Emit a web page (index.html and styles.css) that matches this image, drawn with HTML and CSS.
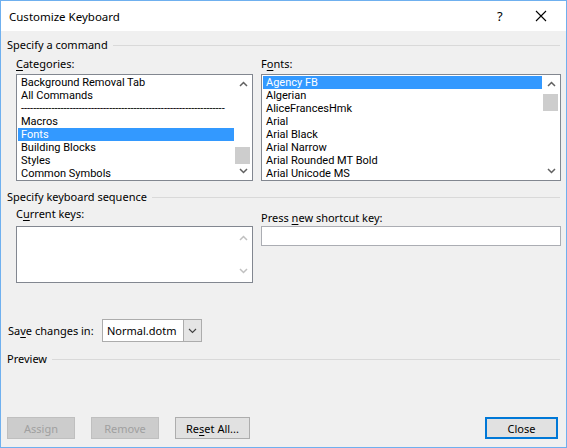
FILE: index.html
```html
<!DOCTYPE html>
<html lang="en">
<head>
  <meta charset="UTF-8" />
  <title>Customize Keyboard</title>
  <link rel="stylesheet" href="styles.css">
</head>
<body>
  <div class="window">
    <div class="titlebar">
      <span class="title">Customize Keyboard</span>
      <span class="help">?</span>
      <svg class="close-x" width="12" height="12" viewBox="0 0 12 12">
        <path d="M1 1 L11 11 M11 1 L1 11" stroke="#000" stroke-width="1.1" fill="none"/>
      </svg>
    </div>

    <div class="content">
      <div class="group-head">Specify a command</div>
      <div class="pair">
        <div class="col">
          <label class="lbl"><u>C</u>ategories:</label>
          <div class="listbox">
            <ul class="items">
              <li>Background Removal Tab</li>
              <li>All Commands</li>
              <li>-------------------------------------------------------------------</li>
              <li>Macros</li>
              <li class="sel">Fonts</li>
              <li>Building Blocks</li>
              <li>Styles</li>
              <li>Common Symbols</li>
            </ul>
            <div class="vscroll">
              <svg class="arrow" width="9" height="6" viewBox="0 0 9 6"><path d="M1 5 L4.5 1.5 L8 5" stroke="#606060" stroke-width="1.5" fill="none"/></svg>
              <div class="track"><div class="thumb thumb-cat"></div></div>
              <svg class="arrow" width="9" height="6" viewBox="0 0 9 6"><path d="M1 1 L4.5 4.5 L8 1" stroke="#606060" stroke-width="1.5" fill="none"/></svg>
            </div>
          </div>
        </div>
        <div class="col">
          <label class="lbl">F<u>o</u>nts:</label>
          <div class="listbox">
            <ul class="items">
              <li class="sel">Agency FB</li>
              <li>Algerian</li>
              <li>AliceFrancesHmk</li>
              <li>Arial</li>
              <li>Arial Black</li>
              <li>Arial Narrow</li>
              <li>Arial Rounded MT Bold</li>
              <li>Arial Unicode MS</li>
            </ul>
            <div class="vscroll">
              <svg class="arrow" width="9" height="6" viewBox="0 0 9 6"><path d="M1 5 L4.5 1.5 L8 5" stroke="#606060" stroke-width="1.5" fill="none"/></svg>
              <div class="track"><div class="thumb thumb-font"></div></div>
              <svg class="arrow" width="9" height="6" viewBox="0 0 9 6"><path d="M1 1 L4.5 4.5 L8 1" stroke="#606060" stroke-width="1.5" fill="none"/></svg>
            </div>
          </div>
        </div>
      </div>

      <div class="group-head seq-head">Specify keyboard sequence</div>
      <div class="pair keys">
        <div class="col">
          <label class="lbl lbl-cur">C<u>u</u>rrent keys:</label>
          <div class="listbox keybox">
            <div class="items"></div>
            <div class="vscroll">
              <svg class="arrow" width="9" height="6" viewBox="0 0 9 6"><path d="M1 5 L4.5 1.5 L8 5" stroke="#c0c0c0" stroke-width="1.5" fill="none"/></svg>
              <div class="track"></div>
              <svg class="arrow" width="9" height="6" viewBox="0 0 9 6"><path d="M1 1 L4.5 4.5 L8 1" stroke="#c0c0c0" stroke-width="1.5" fill="none"/></svg>
            </div>
          </div>
        </div>
        <div class="col">
          <label class="lbl lbl-new">Press <u>n</u>ew shortcut key:</label>
          <div class="textbox"></div>
        </div>
      </div>

      <div class="save-row">
        <label class="lbl">Sa<u>v</u>e changes in:</label>
        <div class="combo">
          <span class="combo-value">Normal.dotm</span>
          <span class="combo-btn">
            <svg width="9" height="6" viewBox="0 0 9 6"><path d="M1 1 L4.5 4.5 L8 1" stroke="#404040" stroke-width="1.1" fill="none"/></svg>
          </span>
        </div>
      </div>

      <div class="group-head preview-head">Preview</div>

      <div class="buttons">
        <button class="btn" disabled>Assign</button>
        <button class="btn" disabled>Remove</button>
        <button class="btn btn-reset">Re<u>s</u>et All...</button>
        <button class="btn btn-default">Close</button>
      </div>
    </div>
  </div>
</body>
</html>
```

FILE: styles.css
```css
body {
  margin: 0;
  font-family: "Noto Sans", "Open Sans", sans-serif;
  font-size: 11px;
  color: #000;
  background: #fff;
}

.window {
  width: 567px;
  height: 448px;
  box-sizing: border-box;
  border: 1px solid #6fb0ef;
  display: flex;
  flex-direction: column;
  background: #f0f0f0;
}

.titlebar {
  height: 30px;
  background: #fff;
  display: flex;
  align-items: center;
  padding-left: 8px;
}

.title {
  flex: 1;
  font-size: 11.5px;
}

.help {
  width: 12px;
  margin-right: 26px;
  font-size: 13px;
}

.close-x {
  margin-right: 19px;
}

.content {
  flex: 1;
  display: flex;
  flex-direction: column;
  padding: 6px 6px 8px 6px;
}

.group-head {
  display: flex;
  align-items: center;
  line-height: 16px;
}

.group-head::after {
  content: "";
  flex: 1;
  border-top: 1px solid #d9d9d9;
  margin-left: 5px;
  margin-top: 1px;
}

.pair {
  display: grid;
  grid-template-columns: 237px 300px;
  column-gap: 8px;
  padding-left: 9px;
  margin-top: 3px;
}

.col {
  display: flex;
  flex-direction: column;
}

.lbl {
  line-height: 16px;
  margin-bottom: 2px;
}

u {
  text-decoration-thickness: 1px;
  text-underline-offset: 2px;
}

.listbox {
  height: 107px;
  box-sizing: border-box;
  border: 1px solid #828790;
  background: #fff;
  display: flex;
}

.items {
  flex: 1;
  list-style: none;
  margin: 0;
  padding: 1px 1px 0 1px;
  overflow: hidden;
}

.items li {
  height: 13px;
  line-height: 13px;
  padding-left: 3px;
  font-family: Roboto, "Noto Sans", sans-serif;
  font-size: 11px;
  white-space: nowrap;
}

.items li.sel {
  background: #3399ff;
  color: #fff;
}

.vscroll {
  width: 17px;
  display: flex;
  flex-direction: column;
  align-items: center;
}

.arrow {
  margin: 6px 0;
}

.track {
  flex: 1;
  align-self: stretch;
  position: relative;
}

.thumb {
  position: absolute;
  left: 0;
  width: 15px;
  background: #cdcdcd;
}

.thumb-cat {
  top: 54px;
  height: 17px;
}

.thumb-font {
  top: 1px;
  height: 17px;
}

.seq-head {
  margin-top: 8px;
}

.keys {
  margin-top: 1px;
}

.lbl-cur {
  margin-bottom: 4px;
}

.lbl-new {
  margin-top: 4px;
  margin-bottom: 0;
}

.keybox {
  height: 57px;
}

.keybox .arrow {
  margin: 8px 0 4px;
}

.keybox .arrow:last-child {
  margin: 4px 0 8px;
}

.textbox {
  height: 20px;
  box-sizing: border-box;
  border: 1px solid #abadb3;
  background: #fff;
}

.save-row {
  display: flex;
  align-items: center;
  margin-top: 36px;
  padding-left: 1px;
}

.save-row .lbl {
  width: 94px;
  margin-bottom: 0;
}

.combo {
  width: 100px;
  height: 23px;
  box-sizing: border-box;
  border: 1px solid #acacac;
  background: #fff;
  display: flex;
}

.combo-value {
  flex: 1;
  line-height: 21px;
  padding-left: 4px;
}

.combo-btn {
  width: 17px;
  border-left: 1px solid #acacac;
  background: #e5e5e5;
  display: flex;
  align-items: center;
  justify-content: center;
}

.preview-head {
  margin-top: 9px;
}

.buttons {
  margin-top: auto;
  display: flex;
  gap: 16px;
  padding-left: 0;
}

.btn {
  font: inherit;
  width: 68px;
  height: 22px;
  box-sizing: border-box;
  border: 1px solid #adadad;
  background: #e1e1e1;
  color: #000;
  padding: 0;
}

.btn:disabled {
  background: #cccccc;
  border-color: #bfbfbf;
  color: #a0a0a0;
}

.btn-reset {
  width: 75px;
}

.btn-default {
  margin-left: auto;
  margin-right: 2px;
  width: 73px;
  border: 2px solid #0078d7;
}
```
